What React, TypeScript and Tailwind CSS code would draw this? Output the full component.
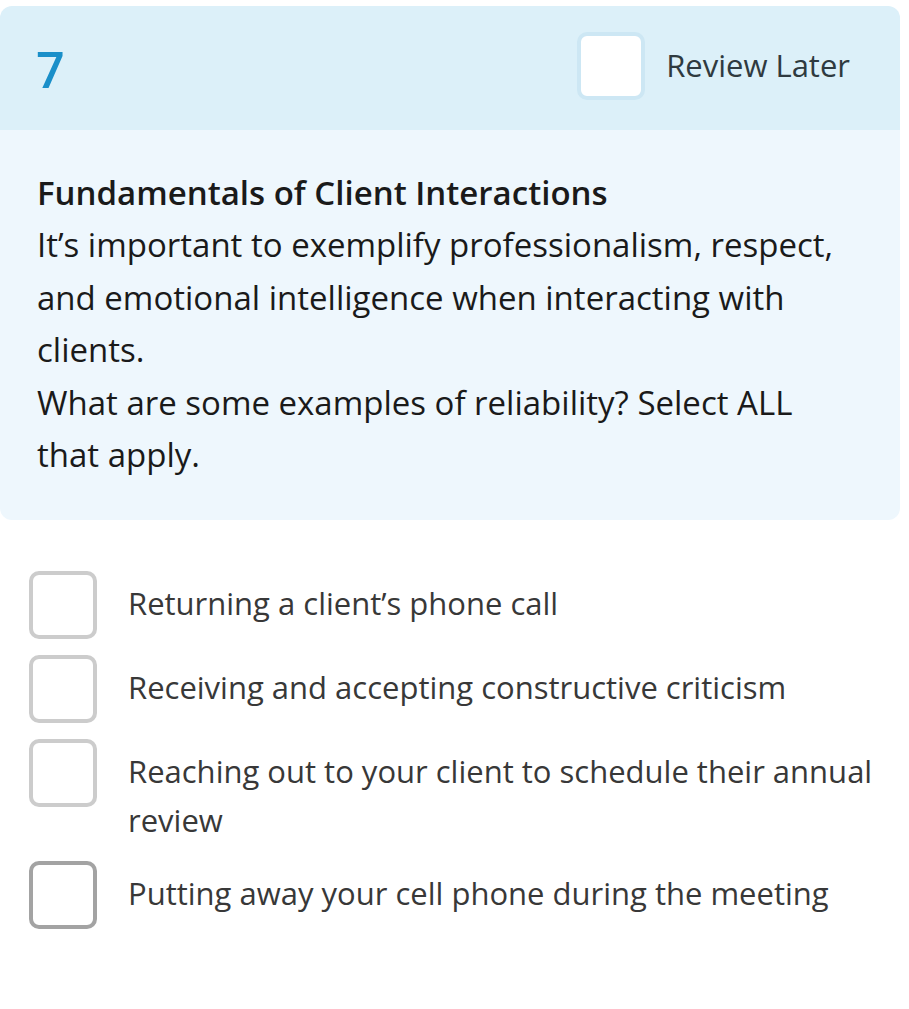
import React from "react";

const options = [
  { text: "Returning a client’s phone call", dark: false },
  { text: "Receiving and accepting constructive criticism", dark: false },
  { text: "Reaching out to your client to schedule their annual review", dark: false },
  { text: "Putting away your cell phone during the meeting", dark: true },
];

export default function App() {
  return (
    <div className="min-h-screen bg-white font-['Open_Sans',sans-serif]">
      {/* Question card */}
      <div className="mr-[9px] pt-[6px]">
        <div className="rounded-[12px] overflow-hidden">
          <div className="h-[124px] bg-[#dcf0f9] flex items-center justify-between pl-[36px] pr-[50px]">
            <span className="text-[50px] font-semibold leading-none text-[#1a8fc9] mt-[2px]">7</span>
            <label className="flex items-center gap-[21px] cursor-pointer">
              <span className="w-[68px] h-[68px] rounded-[10px] border-[4px] border-[#cde7f4] bg-white mt-[-4px]" />
              <span className="text-[31px] text-[#2f3a40] mt-[-6px]">Review Later</span>
            </label>
          </div>
          <div className="bg-[#eef7fd] px-[37px] pt-[37px] pb-[38px] text-[#1a1a1a]">
            <h2 className="text-[33px] font-semibold leading-[52px]">Fundamentals of Client Interactions</h2>
            <p className="text-[33px] leading-[52.5px]">
              It’s important to exemplify professionalism, respect, and emotional intelligence when interacting
              with clients.
            </p>
            <p className="text-[33px] leading-[52.5px]">
              What are some examples of reliability? Select ALL that apply.
            </p>
          </div>
        </div>
      </div>

      {/* Answers */}
      <div className="mt-[51px] pl-[29px] pr-[20px] flex flex-col gap-[16px]">
        {options.map((o) => (
          <label key={o.text} className="flex items-start gap-[31px] cursor-pointer">
            <span
              className={
                o.dark
                  ? "shrink-0 w-[68px] h-[68px] rounded-[10px] border-[4px] border-[#a3a3a3] bg-white"
                  : "shrink-0 w-[68px] h-[68px] rounded-[10px] border-[4px] border-[#cccccc] bg-white"
              }
            />
            <span className="pt-[8px] text-[31px] leading-[49px] text-[#383838]">{o.text}</span>
          </label>
        ))}
      </div>
    </div>
  );
}
